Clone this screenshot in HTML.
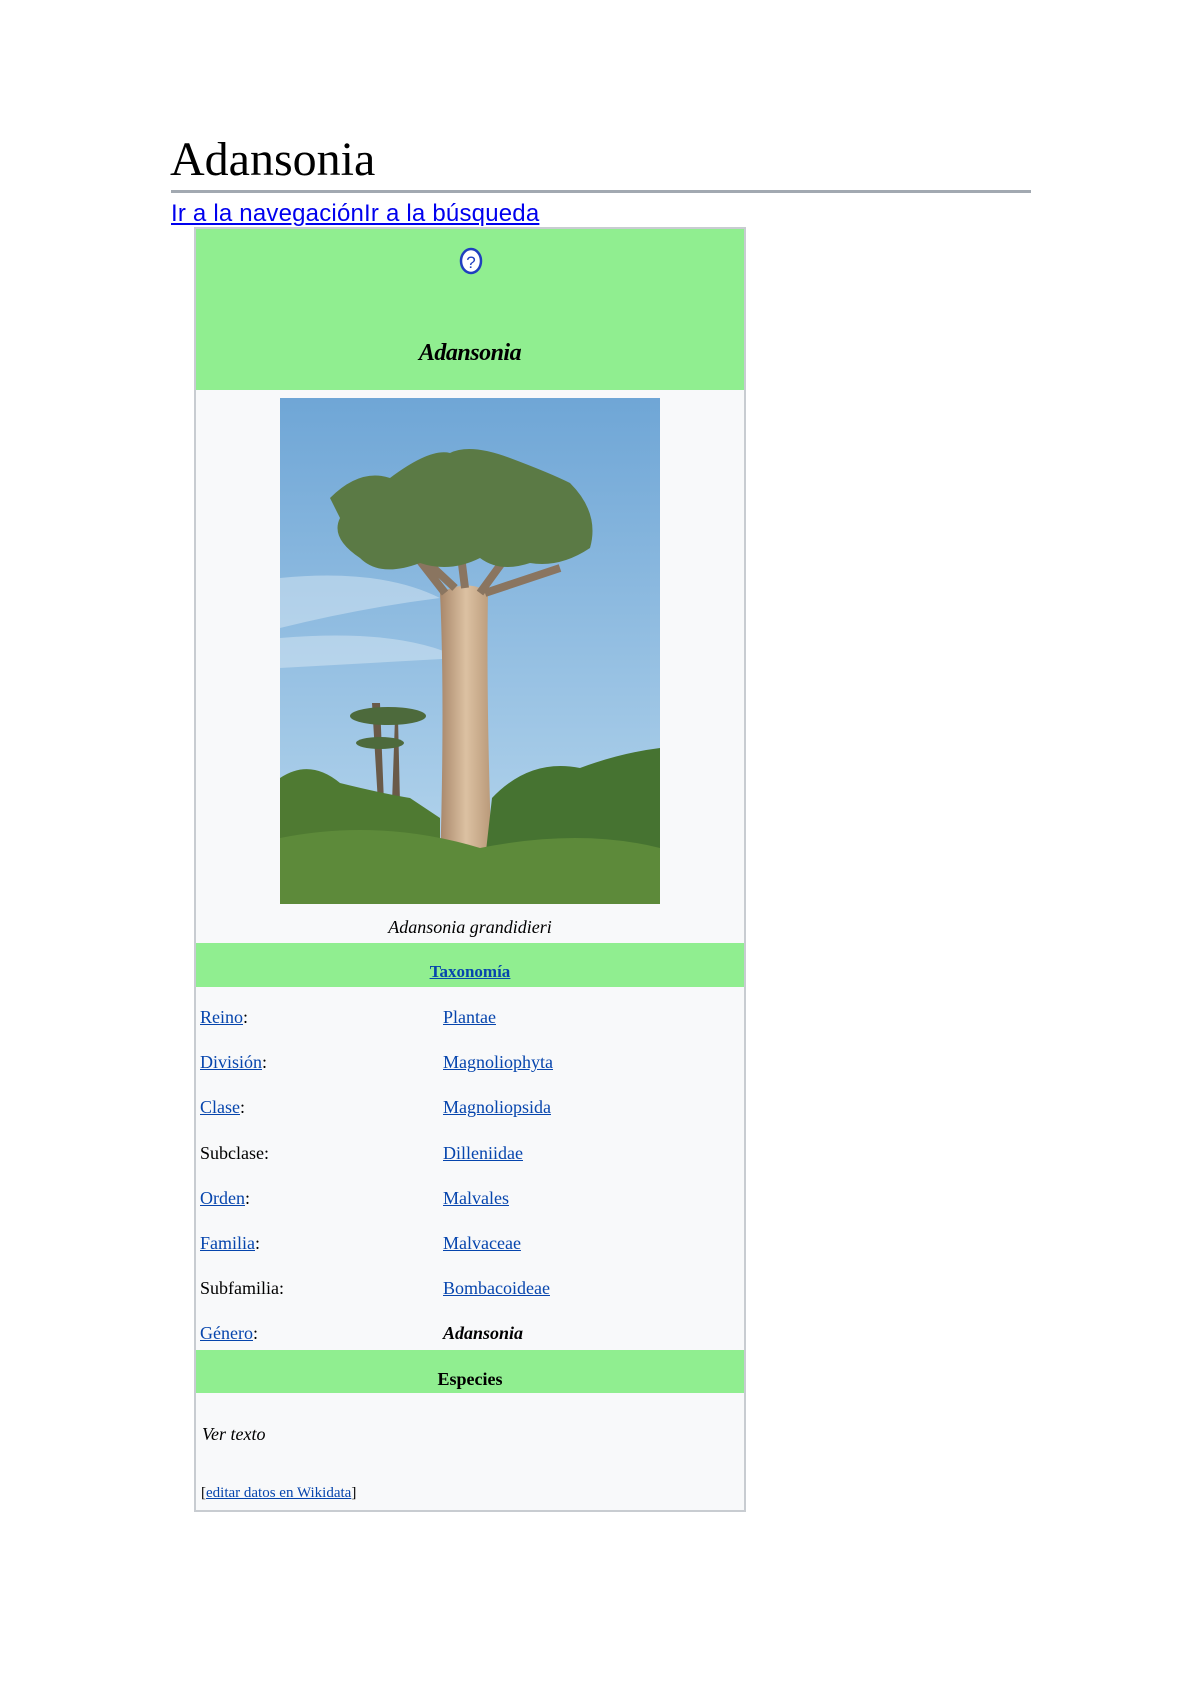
<!DOCTYPE html>
<html><head><meta charset="utf-8"><style>
body{margin:0;background:#fff;width:1200px;height:1698px;position:relative;font-family:"Liberation Serif",serif;}
.a{position:absolute;white-space:nowrap}
.lk{color:#0645ad;text-decoration:underline}
</style></head><body>
<div class="a" style="left:170px;top:132px;font-size:48px;color:#000;">Adansonia</div>
<div class="a" style="left:171px;top:190px;width:860px;height:3px;background:#a2a9b1"></div>
<div class="a" style="left:171px;top:200px;font-family:'Liberation Sans',sans-serif;font-size:24px;letter-spacing:0.2px;color:#0000ee;text-decoration:underline;">Ir a la navegaciónIr a la búsqueda</div>
<div class="a" style="left:194px;top:227px;width:548px;height:1281px;border:2px solid #c8ccd1;background:#f8f9fa"></div>
<div class="a" style="left:196px;top:229px;width:548px;height:161px;background:#90ee90"></div>
<svg class="a" style="left:459px;top:247px" width="24" height="28" viewBox="0 0 24 28"><ellipse cx="12" cy="14" rx="10" ry="12" fill="#fff" stroke="#1f3fbf" stroke-width="2.5"/><text x="12" y="21" font-size="17" text-anchor="middle" fill="#1f3fbf" font-family="Liberation Sans">?</text></svg>
<div class="a" style="left:196px;width:548px;text-align:center;top:340px;font-size:24px;font-weight:bold;font-style:italic;letter-spacing:-0.5px">Adansonia</div>
<svg class="a" style="left:280px;top:398px" width="380" height="506" viewBox="0 0 380 506">
<defs><linearGradient id="s" x1="0" y1="0" x2="0" y2="1"><stop offset="0" stop-color="#6fa6d6"/><stop offset="1" stop-color="#b9d8ee"/></linearGradient>
<linearGradient id="t" x1="0" x2="1"><stop offset="0" stop-color="#a8876a"/><stop offset=".5" stop-color="#dcc1a2"/><stop offset="1" stop-color="#b89878"/></linearGradient></defs>
<rect width="380" height="506" fill="url(#s)"/>
<path d="M0 180 Q100 170 160 200 Q80 210 0 230Z M0 240 Q120 230 180 260 L0 270Z" fill="#d8e8f3" opacity=".5"/>
<path d="M92 305 L98 405 L104 405 L100 305Z M115 320 L112 405 L120 405 L118 320Z" fill="#6a5a48"/>
<ellipse cx="108" cy="318" rx="38" ry="9" fill="#4d6a3c"/><ellipse cx="100" cy="345" rx="24" ry="6" fill="#4d6a3c"/>
<path d="M160 195 Q165 300 160 470 L212 470 Q206 300 208 195 Q190 180 160 195Z" fill="url(#t)"/>
<path d="M165 195 L130 150 M185 190 L175 110 M200 195 L240 140 M205 195 L280 170 M175 190 L100 120" stroke="#8a7560" stroke-width="8"/>
<path d="M50 100 Q80 70 110 80 Q150 50 170 55 Q190 45 230 60 Q270 75 290 85 Q320 115 310 150 Q280 170 250 165 Q220 175 200 160 Q170 175 140 165 Q100 180 80 160 Q50 140 60 120Z" fill="#5b7a45"/>
<path d="M0 380 Q30 360 60 385 Q100 395 130 400 L160 420 L160 506 L0 506Z" fill="#4f7a32"/>
<path d="M212 400 Q250 360 300 370 Q340 355 380 350 L380 506 L200 506Z" fill="#467331"/>
<path d="M0 440 Q100 420 200 450 Q300 430 380 450 L380 506 L0 506Z" fill="#5d8a3a"/>
</svg>
<div class="a" style="left:196px;width:548px;text-align:center;top:917px;font-size:18px;font-style:italic">Adansonia grandidieri</div>
<div class="a" style="left:196px;top:943px;width:548px;height:44px;background:#90ee90"></div>
<div class="a lk" style="left:196px;width:548px;text-align:center;top:962px;font-size:17px;font-weight:bold"><span class="lk">Taxonomía</span></div>
<div class="a" style="left:200px;top:995px;font-size:18px;line-height:45.2px">
<span class="lk">Reino</span>:<br><span class="lk">División</span>:<br><span class="lk">Clase</span>:<br>Subclase:<br><span class="lk">Orden</span>:<br><span class="lk">Familia</span>:<br>Subfamilia:<br><span class="lk">Género</span>:</div>
<div class="a" style="left:443px;top:995px;font-size:18px;line-height:45.2px">
<span class="lk">Plantae</span><br><span class="lk">Magnoliophyta</span><br><span class="lk">Magnoliopsida</span><br><span class="lk">Dilleniidae</span><br><span class="lk">Malvales</span><br><span class="lk">Malvaceae</span><br><span class="lk">Bombacoideae</span><br><b><i>Adansonia</i></b></div>
<div class="a" style="left:196px;top:1350px;width:548px;height:43px;background:#90ee90"></div>
<div class="a" style="left:196px;width:548px;text-align:center;top:1369px;font-size:18px;font-weight:bold">Especies</div>
<div class="a" style="left:202px;top:1424px;font-size:18px;font-style:italic">Ver texto</div>
<div class="a" style="left:201px;top:1485px;font-size:15px">[<span class="lk">editar datos en Wikidata</span>]</div>
</body></html>
